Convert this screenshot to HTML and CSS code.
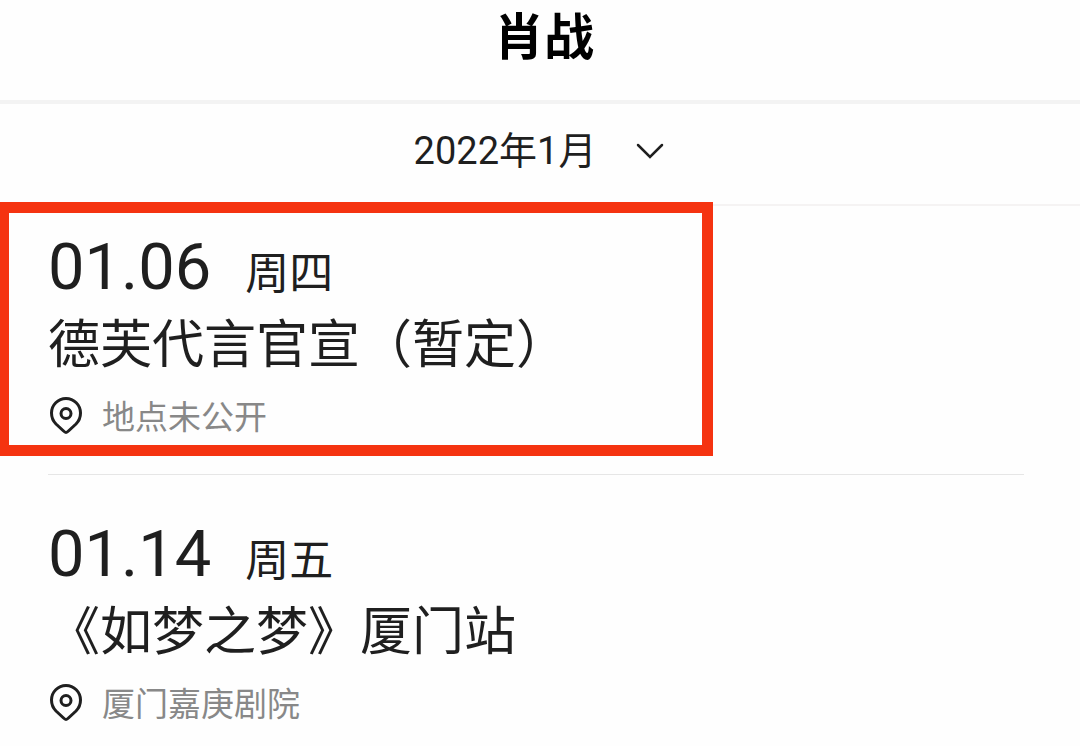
FILE: index.html
```html
<!DOCTYPE html>
<html lang="zh-CN">
<head>
    <meta charset="UTF-8">
    <meta name="viewport" content="width=device-width, initial-scale=1.0">
    <title>肖战</title>
    <link rel="stylesheet" href="styles.css">
</head>
<body>
    <header class="header">
        <h1>肖战</h1>
    </header>
    <div class="month-bar">
        <button type="button" class="month-button">
            2022年1月
            <svg class="chevron" viewBox="0 0 28 16" aria-hidden="true">
                <path d="M2 2 L14 14 L26 2" />
            </svg>
        </button>
    </div>
    <main class="schedule">
        <article class="event highlight">
            <p class="when"><span class="date">01.06</span><span class="weekday">周四</span></p>
            <h2>德芙代言官宣（暂定）</h2>
            <p class="place">
                <svg class="pin" viewBox="0 0 32 37" aria-hidden="true">
                    <path d="M16 35.500 C15 35.500 14 34.500 13 33.500 L6 27 C3 24 1.500 20.500 1.500 16 A14.500 14.500 0 0 1 30.500 16 C30.500 20.500 29 24 26 27 L19 33.500 C18 34.500 17 35.500 16 35.500 Z" />
                    <circle cx="16" cy="16.500" r="5" />
                </svg>
                地点未公开
            </p>
        </article>
        <hr>
        <article class="event">
            <p class="when"><span class="date">01.14</span><span class="weekday">周五</span></p>
            <h2>《如梦之梦》厦门站</h2>
            <p class="place">
                <svg class="pin" viewBox="0 0 32 37" aria-hidden="true">
                    <path d="M16 35.500 C15 35.500 14 34.500 13 33.500 L6 27 C3 24 1.500 20.500 1.500 16 A14.500 14.500 0 0 1 30.500 16 C30.500 20.500 29 24 26 27 L19 33.500 C18 34.500 17 35.500 16 35.500 Z" />
                    <circle cx="16" cy="16.500" r="5" />
                </svg>
                厦门嘉庚剧院
            </p>
        </article>
    </main>
</body>
</html>
```
FILE: styles.css
```css
* {
    box-sizing: border-box;
}
body {
    margin: 0;
    font-family: Roboto, "Noto Sans CJK SC", sans-serif;
    background-color: #fefefe;
    color: #1f1f1f;
}
h1, h2, p {
    margin: 0;
}
.header {
    padding: 0 0 24px 8px;
    border-bottom: 4px solid #f3f3f3;
    text-align: center;
}
h1 {
    font-size: 50px;
    line-height: 76px;
    font-weight: bold;
    color: #000;
}
.month-bar {
    display: flex;
    justify-content: center;
    height: 102px;
    padding-right: 2px;
    border-bottom: 2px solid #f5f3f3;
}
.month-button {
    display: flex;
    align-items: center;
    gap: 40px;
    padding: 0 0 13px;
    border: none;
    background: none;
    font: inherit;
    font-size: 38px;
    color: inherit;
    cursor: pointer;
}
.chevron {
    width: 28px;
    height: 16px;
    margin-top: 6px;
    fill: none;
    stroke: #1f1f1f;
    stroke-width: 2.5;
    stroke-linecap: round;
}
.event {
    padding: 41px 48px 24px;
}
/* Framed event, sits over the line under the month bar */
.highlight {
    width: 66%;
    margin-top: -4px;
    padding: 16px 39px 1px;
    border: 11px solid #f53310;
    border-left-width: 9px;
}
.when {
    display: flex;
    align-items: baseline;
    gap: 34px;
    line-height: 76px;
}
.date {
    font-size: 65px;
}
.weekday {
    font-size: 44px;
}
h2 {
    font-size: 52px;
    line-height: 68px;
    font-weight: normal;
    white-space: nowrap;
}
.place {
    display: flex;
    align-items: center;
    gap: 18px;
    margin-top: 12px;
    font-size: 33px;
    line-height: 52px;
    color: #888;
}
.pin {
    width: 36px;
    height: 37px;
    margin-bottom: 5px;
    fill: none;
    stroke: #1f1f1f;
    stroke-width: 3;
}
hr {
    margin: 18px 56px 0 48px;
    border: none;
    border-top: 1px solid #e6e6e6;
}
```
